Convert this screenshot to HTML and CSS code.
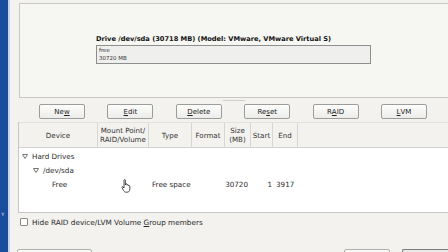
FILE: index.html
```html
<!DOCTYPE html>
<html>
<head>
<meta charset="utf-8">
<link rel="stylesheet" href="styles.css">
</head>
<body>
<div class="sidebar"><span class="side-mark">ʏ</span></div>
<div class="strip"></div>
<div class="main">
  <div class="panel">
    <div class="drive-title">Drive /dev/sda (30718 MB) (Model: VMware, VMware Virtual S)</div>
    <div class="drive-box">
      <div>free</div>
      <div>30720 MB</div>
    </div>
  </div>
  <div class="grip"></div>
  <div class="buttons">
    <div class="btn">Ne<u>w</u></div>
    <div class="btn"><u>E</u>dit</div>
    <div class="btn"><u>D</u>elete</div>
    <div class="btn">Re<u>s</u>et</div>
    <div class="btn">R<u>A</u>ID</div>
    <div class="btn"><u>L</u>VM</div>
  </div>
  <div class="table">
    <div class="thead">
      <div class="th">Device</div>
      <div class="th">Mount Point/<br>RAID/Volume</div>
      <div class="th">Type</div>
      <div class="th">Format</div>
      <div class="th">Size<br>(MB)</div>
      <div class="th">Start</div>
      <div class="th">End</div>
      <div class="th last"></div>
    </div>
    <div class="tbody">
      <div class="row">
        <div class="cell tree lvl1"><svg class="tri" width="6" height="5" viewBox="0 0 6 5"><path d="M0.5 0.5 H5.5 L3 4.5 Z" fill="none" stroke="#555" stroke-width="0.8"/></svg><span>Hard Drives</span></div>
      </div>
      <div class="row">
        <div class="cell tree lvl2"><svg class="tri" width="6" height="5" viewBox="0 0 6 5"><path d="M0.5 0.5 H5.5 L3 4.5 Z" fill="none" stroke="#555" stroke-width="0.8"/></svg><span>/dev/sda</span></div>
      </div>
      <div class="row">
        <div class="cell dev3">Free</div>
        <div class="cell"></div>
        <div class="cell type">Free space</div>
        <div class="cell"></div>
        <div class="cell size">30720</div>
        <div class="cell start">1</div>
        <div class="cell end">3917</div>
      </div>
      <svg class="cursor" width="11" height="14" viewBox="0 0 11 14"><path d="M3 1.2 C3 0.4 4.4 0.4 4.4 1.2 V6 L4.6 5.2 C4.8 4.5 6 4.6 6 5.4 V6.2 C6.2 5.5 7.4 5.6 7.4 6.4 V7 C7.6 6.4 8.8 6.5 8.8 7.3 V10 C8.8 12 7.8 13.2 6 13.2 H5 C3.8 13.2 3.2 12.6 2.6 11.6 L1 8.6 C0.6 7.9 1.5 7.3 2.1 7.9 L3 9 Z" fill="#fff" stroke="#222" stroke-width="0.8"/></svg>
    </div>
  </div>
  <div class="check-row"><span class="checkbox"></span><span class="check-label">Hide RAID device/LVM Volume <u>G</u>roup members</span></div>
  <div class="bottom">
    <div class="bbtn wide"></div>
    <div class="spacer"></div>
    <div class="bbtn"></div>
    <div class="bbtn dark"></div>
  </div>
</div>
</body>
</html>
```

FILE: styles.css
```css
html, body {
  margin: 0;
  padding: 0;
  width: 448px;
  height: 252px;
  overflow: hidden;
  background: #f3f2ef;
  font-family: "DejaVu Sans", sans-serif;
  color: #2a2a2a;
}
body {
  display: flex;
}
.sidebar {
  width: 8px;
  flex: none;
  background: #1a4d9c;
  position: relative;
}
.side-mark {
  position: absolute;
  left: 1px;
  top: 210px;
  font-size: 6px;
  color: #cfd8ee;
}
.strip {
  width: 2px;
  flex: none;
  background: #c9d2ef;
}
.main {
  flex: none;
  width: 438px;
  display: flex;
  flex-direction: column;
  padding-left: 9px;
  box-sizing: border-box;
}
.main > * { flex: none; }
.panel {
  margin-top: 3px;
  height: 95px;
  width: 429px;
  box-sizing: border-box;
  border: 1px solid #c8c8c3;
  border-right: none;
  background: #f6f6f3;
  padding: 30px 0 0 76px;
  display: flex;
  flex-direction: column;
}
.drive-title {
  font-size: 6.65px;
  font-weight: bold;
  line-height: 10px;
  white-space: nowrap;
  color: #111;
}
.drive-box {
  margin-top: 1px;
  width: 275px;
  height: 19px;
  box-sizing: border-box;
  border: 1px solid #8e8e8e;
  background: #efefee;
  font-size: 5.5px;
  line-height: 7.5px;
  padding: 1px 2px;
  color: #333;
}
.grip {
  margin: 2px 0 0 204px;
  width: 22px;
  height: 1px;
  background: #cfcfcc;
}
.buttons {
  margin-top: 3px;
  padding-left: 20px;
  display: flex;
  gap: 22.4px;
}
.btn {
  width: 46px;
  height: 15px;
  box-sizing: border-box;
  border: 1px solid #9c9c9a;
  border-radius: 2px;
  background: linear-gradient(#fdfdfc, #ececea);
  font-size: 7px;
  display: flex;
  align-items: center;
  justify-content: center;
  color: #222;
}
.btn u { text-decoration-thickness: 0.5px; text-underline-offset: 1px; }
.table {
  margin-top: 3px;
  margin-left: -1px;
  width: 430px;
  height: 91px;
  box-sizing: border-box;
  border-left: 1px solid #c8c8c3;
  border-bottom: 1px solid #c8c8c3;
  display: flex;
  flex-direction: column;
}
.thead {
  flex: none;
  display: grid;
  grid-template-columns: 79px 51px 43px 33px 26px 22px 25px 1fr;
  height: 26px;
  box-sizing: border-box;
  border-top: 1px solid #e2e2de;
  border-bottom: 1px solid #d2d2ce;
  background: #f3f2ef;
}
.th {
  border-right: 1px solid #d6d6d2;
  font-size: 7.1px;
  line-height: 9px;
  color: #333;
  display: flex;
  align-items: center;
  justify-content: center;
  text-align: center;
  white-space: nowrap;
}
.th.last { border-right: none; }
.tbody {
  flex: 1;
  background: #fff;
  padding-top: 1px;
  position: relative;
}
.row {
  display: grid;
  grid-template-columns: 79px 51px 43px 33px 26px 22px 25px 1fr;
  height: 14px;
  align-items: center;
  font-size: 7.2px;
  color: #2a2a2a;
}
.cell { white-space: nowrap; }
.tree {
  display: flex;
  align-items: center;
  grid-column: 1 / span 3;
}
.tree .tri { margin-right: 4px; }
.lvl1 { padding-left: 3px; }
.lvl2 { padding-left: 14px; }
.dev3 { padding-left: 33px; }
.type { padding-left: 3px; }
.size { text-align: right; padding-right: 3px; }
.start { text-align: right; padding-right: 1px; }
.end { padding-left: 3px; }
.cursor {
  position: absolute;
  left: 102px;
  top: 31px;
}
.check-row {
  margin-top: 3px;
  height: 12px;
  display: flex;
  align-items: center;
  font-size: 7.3px;
  color: #2a2a2a;
  padding-left: 1px;
}
.checkbox {
  width: 6px;
  height: 6px;
  border: 1px solid #8a8a88;
  background: #fff;
  border-radius: 1px;
  margin-right: 4px;
}
.bottom {
  margin-top: 21px;
  display: flex;
  gap: 12px;
  margin-left: -2px;
  width: 431px;
}
.bbtn {
  width: 46px;
  height: 15px;
  box-sizing: border-box;
  border: 1px solid #b0b0ad;
  border-radius: 2px;
  background: #f8f8f6;
  flex: none;
}
.bbtn.wide { width: 75px; }
.bbtn.dark { border-color: #7d7d7b; background: #e9e9e7; border-right: none; border-top-right-radius: 0; border-bottom-right-radius: 0; }
.spacer { flex: 1; }
```
